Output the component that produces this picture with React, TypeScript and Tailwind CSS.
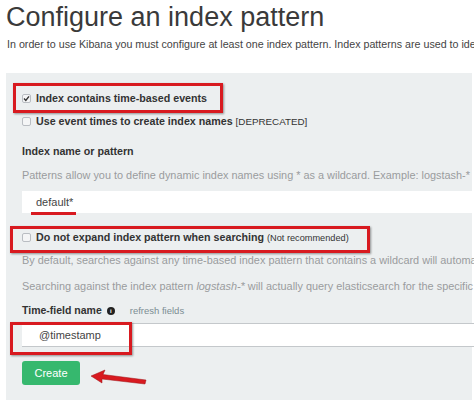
import React from "react";

function Box({ checked }: { checked?: boolean }) {
  return (
    <span className="inline-flex w-[9px] h-[9px] rounded-[2px] border border-[#b9bdc2] bg-[#f4f5f6] items-center justify-center shrink-0">
      {checked && (
        <svg width="7" height="7" viewBox="0 0 7 7">
          <path d="M1 3.6 L2.8 5.4 L6 1.4" stroke="#333" strokeWidth="1.4" fill="none" />
        </svg>
      )}
    </span>
  );
}

export default function App() {
  return (
    <div
      className="relative w-[474px] h-[405px] overflow-hidden bg-white text-[#333]"
      style={{ fontFamily: '"Liberation Sans", Arial, sans-serif' }}
    >
      <h1 className="ml-[6px] pt-[1px] text-[27px] leading-[32px] font-normal text-[#3a3a3a] whitespace-nowrap">
        Configure an index pattern
      </h1>
      <p className="ml-[7px] mt-[5px] text-[10.7px] leading-[13px] text-[#444] whitespace-nowrap">
        In order to use Kibana you must configure at least one index pattern. Index patterns are used to identify the Elasticsearch index
      </p>

      <div className="ml-[6px] mt-[22px] w-[466px] h-[327px] bg-[#eceff0] pl-[16px] pt-[17px]">
        <div className="flex items-center gap-[5px] h-[16px] text-[10.7px] font-bold text-[#333]">
          <Box checked />
          <span>Index contains time-based events</span>
        </div>
        <div className="flex items-center gap-[5px] h-[16px] mt-[7px] text-[10.7px] text-[#333] whitespace-nowrap">
          <Box />
          <span>
            <span className="font-bold">Use event times to create index names</span>{" "}
            <span className="text-[9.8px]">[DEPRECATED]</span>
          </span>
        </div>

        <div className="mt-[15px] text-[10.7px] font-bold text-[#333] leading-[14px]">Index name or pattern</div>
        <div className="mt-[10px] text-[10.9px] text-[#9a9c9e] leading-[14px] whitespace-nowrap">
          Patterns allow you to define dynamic index names using * as a wildcard. Example: logstash-*
        </div>
        <div className="mt-[9px] w-[460px] h-[22px] bg-white flex items-center pl-[14px] text-[11px] text-[#444]">
          default*
        </div>

        <div className="mt-[16px] flex items-center gap-[5px] h-[16px] text-[10.7px] text-[#333] whitespace-nowrap">
          <Box />
          <span>
            <span className="font-bold">Do not expand index pattern when searching</span>{" "}
            <span className="text-[9.2px]">(Not recommended)</span>
          </span>
        </div>
        <div className="mt-[8px] text-[10.9px] text-[#9a9c9e] leading-[14px] whitespace-nowrap">
          By default, searches against any time-based index pattern that contains a wildcard will automatically be expanded
        </div>
        <div className="mt-[12px] text-[10.9px] text-[#9a9c9e] leading-[14px] whitespace-nowrap">
          Searching against the index pattern <i>logstash-*</i> will actually query elasticsearch for the specific matching indices
        </div>

        <div className="mt-[11px] flex items-center h-[14px] whitespace-nowrap">
          <span className="text-[10.5px] font-bold text-[#333]">Time-field name</span>
          <span className="ml-[5px] w-[8px] h-[8px] rounded-full bg-[#222] text-white text-[6px] font-bold flex items-center justify-center leading-none">
            i
          </span>
          <span className="ml-[15px] text-[9.5px] text-[#7b8d93]">refresh fields</span>
        </div>
        <div className="mt-[5px] w-[460px] h-[24px] bg-white border-y border-[#c4c8cb] flex items-center pl-[17px] text-[11px] text-[#444]">
          @timestamp
        </div>

        <button className="mt-[14px] w-[58px] h-[24px] rounded-[3px] bg-[#36b86e] text-white text-[11px] flex items-center justify-center">
          Create
        </button>
      </div>

      {/* annotations */}
      <div className="absolute left-[13px] top-[83px] w-[210px] h-[30px] border-[3px] border-[#d81a20] shadow-[1px_1px_2px_rgba(0,0,0,0.4)]" />
      <div className="absolute left-[31px] top-[212px] w-[45px] h-[3px] bg-[#d81a20]" />
      <div className="absolute left-[10px] top-[226px] w-[360px] h-[27px] border-[3px] border-[#d81a20] shadow-[1px_1px_2px_rgba(0,0,0,0.4)]" />
      <div className="absolute left-[10px] top-[322px] w-[122px] h-[33px] border-[3px] border-[#d81a20] shadow-[1px_1px_2px_rgba(0,0,0,0.4)]" />
      <svg className="absolute left-[88px] top-[368px]" width="64" height="22" viewBox="0 0 64 22">
        <path d="M3 8 L17 2 L15 6.5 L58 12 L57 16 L14 11 L14 15 Z" fill="#d81a20" stroke="#9c1014" strokeWidth="0.5" />
      </svg>
    </div>
  );
}
